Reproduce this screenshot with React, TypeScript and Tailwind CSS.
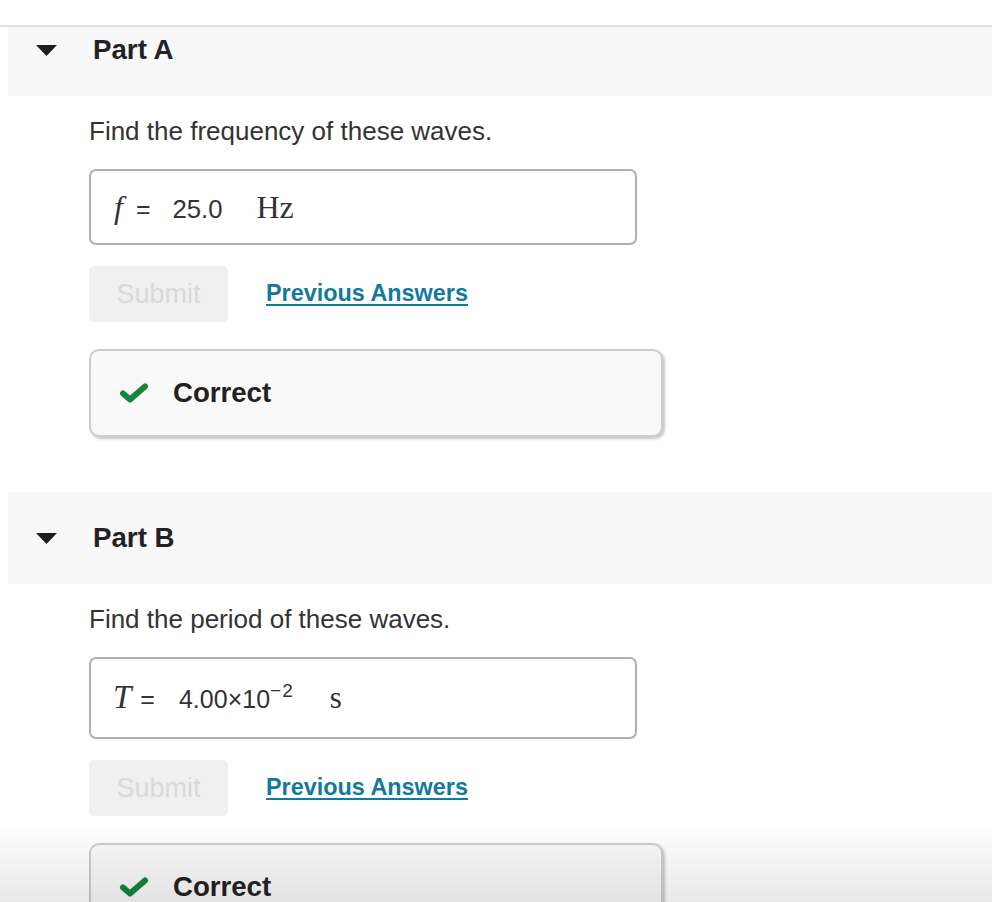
import React from "react";

function Triangle() {
  return (
    <svg width="21" height="11" viewBox="0 0 21 11" className="shrink-0">
      <polygon points="0,0 21,0 10.5,11" fill="#1c1c1c" />
    </svg>
  );
}

function Check() {
  return (
    <svg width="30" height="20" viewBox="0 0 30 20" className="shrink-0">
      <polyline
        points="4,10.5 11,16.5 26,3.5"
        fill="none"
        stroke="#15843f"
        strokeWidth="6"
        strokeLinecap="round"
        strokeLinejoin="round"
      />
    </svg>
  );
}

function Header({ label, first }: { label: string; first?: boolean }) {
  return (
    <div
      className={
        first
          ? "ml-2 bg-[#f8f8f8] h-[69px] pb-[23px] flex items-center"
          : "ml-2 bg-[#f8f8f8] h-[92px] flex items-center"
      }
    >
      <div className="ml-[28px]">
        <Triangle />
      </div>
      <div className="ml-[36px] text-[27.7px] font-bold text-[#222] leading-none">
        {label}
      </div>
    </div>
  );
}

function Actions() {
  return (
    <div className="mt-[21px] flex items-center">
      <div className="w-[139px] h-[56px] rounded-[5px] bg-[#f0f0f0] text-[#d9d9d9] text-[27px] flex items-center justify-center">
        Submit
      </div>
      <a className="ml-[38px] text-[23.4px] font-bold text-[#14799a] underline decoration-2 underline-offset-[3px] cursor-pointer">
        Previous Answers
      </a>
    </div>
  );
}

function Correct() {
  return (
    <div className="mt-[27px] w-[574px] h-[88px] rounded-[10px] border-2 border-[#cdcdcd] bg-[#f9f9f9] shadow-[2px_2px_3px_rgba(0,0,0,0.22)] flex items-center pl-[28px]">
      <Check />
      <span className="ml-[24px] text-[27.6px] font-bold text-[#222]">Correct</span>
    </div>
  );
}

export default function App() {
  return (
    <div className="relative h-[902px] overflow-hidden bg-white font-['Liberation_Sans',Arial,sans-serif]">
      <div className="h-[25px]" />
      <div className="h-[2px] bg-[#e0e0e0]" />
      <Header label="Part A" first />

      <div className="pl-[89px]">
        <p className="mt-[20px] text-[26px] leading-[30px] text-[#333]">
          Find the frequency of these waves.
        </p>
        <div className="mt-[23px] w-[548px] h-[76px] rounded-[7px] border-2 border-[#b0b0b0] flex items-center pl-[23px]">
          <div className="flex items-baseline text-[#333]">
            <span className="font-['Liberation_Serif',serif] italic text-[32px]">f</span>
            <span className="ml-[13px] text-[25px]">=</span>
            <span className="ml-[22px] text-[25.7px]">25.0</span>
            <span className="ml-[34px] font-['Liberation_Serif',serif] text-[32px]">Hz</span>
          </div>
        </div>
        <Actions />
        <Correct />
      </div>

      <div className="mt-[55px]">
        <Header label="Part B" />
      </div>

      <div className="pl-[89px]">
        <p className="mt-[20px] text-[26px] leading-[30px] text-[#333]">
          Find the period of these waves.
        </p>
        <div className="mt-[23px] w-[548px] h-[82px] rounded-[7px] border-2 border-[#b0b0b0] flex items-center pl-[22px]">
          <div className="flex items-baseline text-[#333]">
            <span className="font-['Liberation_Serif',serif] italic text-[33px]">T</span>
            <span className="ml-[9px] text-[25px]">=</span>
            <span className="ml-[24px] text-[25px]">
              4.00×10
              <sup className="text-[19px] relative top-[-11px] tracking-[1px]">−2</sup>
            </span>
            <span className="ml-[36px] font-['Liberation_Serif',serif] text-[31px]">s</span>
          </div>
        </div>
        <Actions />
        <Correct />
      </div>

      <div className="pointer-events-none absolute left-0 right-0 bottom-0 h-[80px] bg-gradient-to-b from-transparent to-black/[0.09]" />
    </div>
  );
}
